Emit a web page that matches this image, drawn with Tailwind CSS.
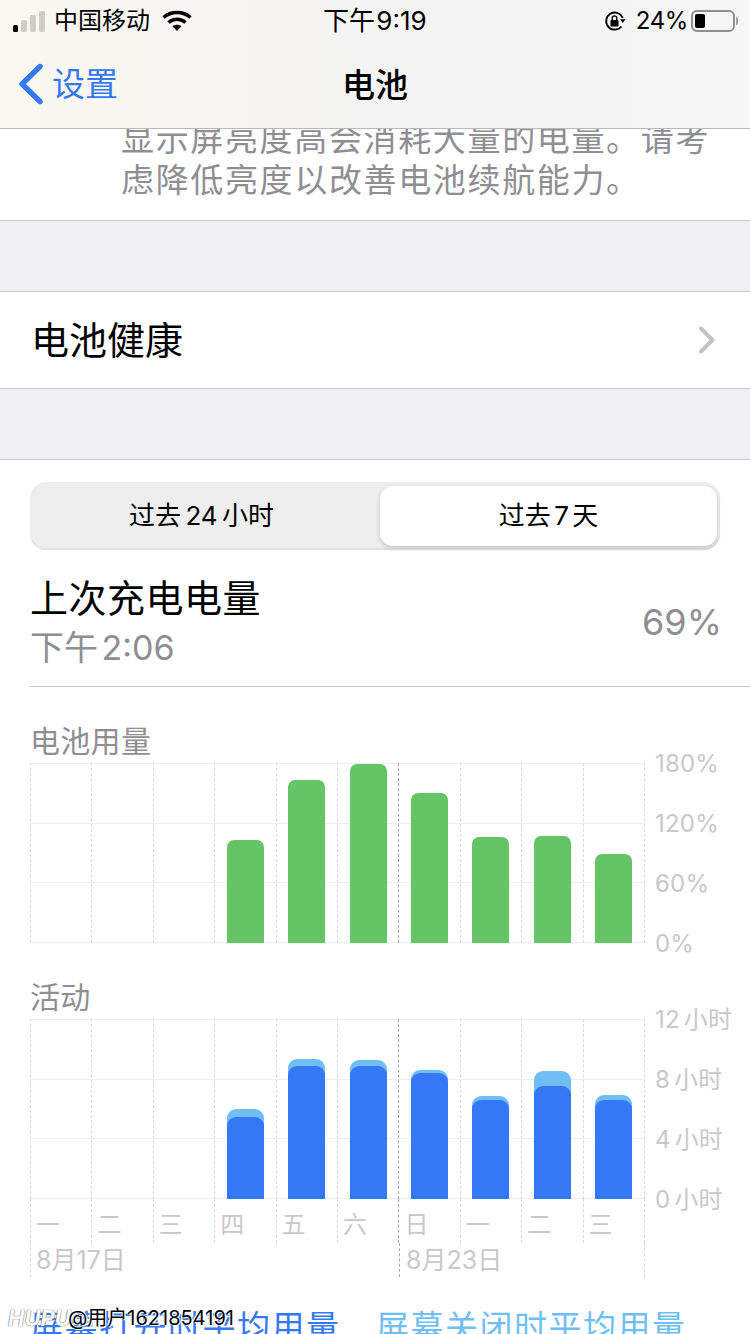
<!DOCTYPE html>
<html lang="zh">
<head>
    <meta charset="UTF-8">
    <meta name="viewport" content="width=device-width, initial-scale=1.0">
    <title>电池</title>
    <script src="https://cdn.jsdelivr.net/npm/@tailwindcss/browser@4"></script>
</head>
<body class="bg-white">
<div class="relative w-[750px] h-[1334px] overflow-hidden bg-white font-['Inter','Noto_Sans_CJK_SC',sans-serif] text-black">

    <!-- Status bar + nav -->
    <header class="h-[129px] border-b border-[#b9b9bc] bg-gradient-to-r from-[#fbf8f1] via-[#f4f4f4] to-[#f6f6f6]">
        <div class="h-[42px] flex items-center justify-between pl-[13px] pr-[12px] relative">
            <div class="flex items-center">
                <div class="flex items-end gap-[3px] h-[22px] mt-[-1px]">
                    <span class="w-[5px] h-[7px] rounded-[1.5px] bg-black"></span>
                    <span class="w-[6px] h-[12px] rounded-[1.5px] bg-[#cfcdc7]"></span>
                    <span class="w-[6px] h-[17px] rounded-[1.5px] bg-[#cfcdc7]"></span>
                    <span class="w-[6px] h-[21px] rounded-[1.5px] bg-[#cfcdc7]"></span>
                </div>
                <span class="ml-[9px] text-[24px] leading-none">中国移动</span>
                <svg class="ml-[12px]" width="30" height="22" viewBox="0 0 30 22">
                    <path d="M1.5 7.5C9 .8 21 .8 28.5 7.5" fill="none" stroke="#000" stroke-width="3.6"/>
                    <path d="M6.5 12.5C11.5 8.2 18.5 8.2 23.5 12.5" fill="none" stroke="#000" stroke-width="3.6"/>
                    <path d="M10.5 16.2C13 14.2 17 14.2 19.5 16.2L15 21Z" fill="#000"/>
                </svg>
            </div>
            <span class="absolute left-[323px] top-[6px] text-[26px] leading-[30px] whitespace-nowrap [word-spacing:-6px]">下午 9:19</span>
            <div class="flex items-center">
                <svg width="22" height="22" viewBox="0 0 22 22">
                    <path d="M17.5 16.5A8.6 8.6 0 1 1 18.8 8" fill="none" stroke="#000" stroke-width="1.8"/>
                    <path d="M16 9.2h5.5L18.8 13Z" fill="#000"/>
                    <rect x="6.5" y="10" width="8" height="6.5" rx="1" fill="#000"/>
                    <path d="M8.2 10V8.2a2.3 2.3 0 0 1 4.6 0V10" fill="none" stroke="#000" stroke-width="1.4"/>
                </svg>
                <span class="ml-[10px] text-[24px] leading-none tracking-[-0.4px]">24%</span>
                <div class="ml-[3px] w-[44px] h-[22px] rounded-[6px] border-2 border-[#8f8f8f] p-[2px]">
                    <div class="w-[10px] h-full rounded-[2px] bg-black"></div>
                </div>
                <span class="ml-[1px] w-[2px] h-[8px] rounded-r bg-[#a0a0a0]"></span>
            </div>
        </div>
        <div class="relative h-[86px] flex items-center justify-center">
            <div class="absolute left-[17px] top-[21px] flex items-center">
                <svg width="27" height="42" viewBox="0 0 27 42">
                    <path d="M23 3.5 5 21l18 17.5" fill="none" stroke="#3478f6" stroke-width="5.4" stroke-linecap="round" stroke-linejoin="round"/>
                </svg>
                <span class="ml-[8px] text-[33px] leading-none text-[#3478f6]">设置</span>
            </div>
            <span class="text-[33px] leading-none font-medium">电池</span>
        </div>
    </header>

    <!-- Brightness tip, scrolled under the nav -->
    <section class="h-[92px] border-b border-[#c8c8cc] bg-white overflow-hidden pl-[121px]">
        <p class="mt-[-10px] text-[33px] leading-[41px] tracking-[1.65px] text-[#8e8e93] whitespace-nowrap">显示屏亮度高会消耗大量的电量。请考<br>虑降低亮度以改善电池续航能力。</p>
    </section>
    <div class="h-[70px] bg-[#efeff4]"></div>

    <!-- Battery health row -->
    <section class="h-[98px] border-y border-[#c8c8cc] flex items-center justify-between pl-[31px] pr-[34px]">
        <span class="text-[38px] leading-none">电池健康</span>
        <svg width="18" height="30" viewBox="0 0 18 30">
            <path d="M3 3.5 14.5 15 3 26.5" fill="none" stroke="#c4c4c7" stroke-width="4" stroke-linecap="round" stroke-linejoin="round"/>
        </svg>
    </section>
    <div class="h-[70px] bg-[#efeff4]"></div>

    <!-- Usage panel -->
    <section class="border-t border-[#c8c8cc] pt-[22px]">
        <div class="mx-[30px] w-[690px] h-[68px] rounded-[16px] bg-[#eeeeef] flex p-[4px] pr-[3px] shadow-[inset_0_-2px_0_#e3e3e5]">
            <div class="w-[346px] pr-[11px] flex items-center justify-center text-[26px] leading-none [word-spacing:-3px]">过去 24 小时</div>
            <div class="flex-1 rounded-[13px] bg-white flex items-center justify-center text-[26px] leading-none [word-spacing:-4px] shadow-[0_2px_5px_rgba(0,0,0,0.18)]">过去 7 天</div>
        </div>

        <div class="ml-[30px] h-[137px] pt-[7px] border-b border-[#c8c8cc] flex items-center justify-between pr-[28px]">
            <div>
                <div class="text-[38px] leading-[46px] tracking-[0.5px]">上次充电电量</div>
                <div class="mt-[6px] text-[34px] leading-[42px] text-[#8e8e93] [word-spacing:-6px]">下午 2:06</div>
            </div>
            <span class="text-[36px] leading-none text-[#8e8e93]">69%</span>
        </div>

        <!-- Battery level chart -->
        <h3 class="ml-[30px] mt-[36px] h-[40px] text-[30px] tracking-[0.3px] leading-[36px] text-[#8e8e93]">电池用量</h3>
        <div class="flex">
            <div class="relative ml-[30px] w-[615px] h-[180px]">
                <div class="absolute inset-0 grid grid-rows-3 border-y border-[#eeeeef]">
                    <div></div>
                    <div class="border-y border-[#eeeeef]"></div>
                    <div></div>
                </div>
                <div class="relative h-full grid grid-cols-10 border-r border-dashed border-[#d9d9db]">
                    <div class="border-l border-dashed border-[#d9d9db]"></div>
                    <div class="border-l border-dashed border-[#d9d9db]"></div>
                    <div class="border-l border-dashed border-[#d9d9db]"></div>
                    <div class="border-l border-dashed border-[#d9d9db] flex items-end justify-center"><div class="w-[37px] h-[103px] rounded-t-[7px] bg-[#65c466]"></div></div>
                    <div class="border-l border-dashed border-[#d9d9db] flex items-end justify-center"><div class="w-[37px] h-[163px] rounded-t-[7px] bg-[#65c466]"></div></div>
                    <div class="border-l border-dashed border-[#d9d9db] flex items-end justify-center"><div class="w-[37px] h-[179px] rounded-t-[7px] bg-[#65c466]"></div></div>
                    <div class="border-l border-dashed border-[#a9a9ac] flex items-end justify-center"><div class="w-[37px] h-[150px] rounded-t-[7px] bg-[#65c466]"></div></div>
                    <div class="border-l border-dashed border-[#d9d9db] flex items-end justify-center"><div class="w-[37px] h-[106px] rounded-t-[7px] bg-[#65c466]"></div></div>
                    <div class="border-l border-dashed border-[#d9d9db] flex items-end justify-center"><div class="w-[37px] h-[107px] rounded-t-[7px] bg-[#65c466]"></div></div>
                    <div class="border-l border-dashed border-[#d9d9db] flex items-end justify-center"><div class="w-[37px] h-[89px] rounded-t-[7px] bg-[#65c466]"></div></div>
                </div>
            </div>
            <div class="ml-[10px] translate-y-[1px] h-[180px] flex flex-col justify-between text-[24px] tracking-[0.2px] text-[#c8c8cc] whitespace-nowrap">
                <span class="h-0 flex items-center">180%</span>
                <span class="h-0 flex items-center">120%</span>
                <span class="h-0 flex items-center">60%</span>
                <span class="h-0 flex items-center">0%</span>
            </div>
        </div>

        <!-- Activity chart -->
        <h3 class="ml-[30px] mt-[36px] h-[40px] text-[30px] tracking-[0.3px] leading-[36px] text-[#8e8e93]">活动</h3>
        <div class="flex">
            <div class="w-[645px]">
                <div class="relative ml-[30px] w-[615px] h-[180px]">
                    <div class="absolute inset-0 grid grid-rows-3 border-y border-[#eeeeef]">
                        <div></div>
                        <div class="border-y border-[#eeeeef]"></div>
                        <div></div>
                    </div>
                    <div class="relative h-full grid grid-cols-10 border-r border-dashed border-[#d9d9db]">
                        <div class="border-l border-dashed border-[#d9d9db]"></div>
                        <div class="border-l border-dashed border-[#d9d9db]"></div>
                        <div class="border-l border-dashed border-[#d9d9db]"></div>
                        <div class="border-l border-dashed border-[#d9d9db] flex items-end justify-center"><div class="w-[37px] h-[90px] pt-[8px] rounded-t-[9px] bg-[#6fbff5]"><div class="h-full rounded-t-[9px] bg-[#3478f6]"></div></div></div>
                        <div class="border-l border-dashed border-[#d9d9db] flex items-end justify-center"><div class="w-[37px] h-[140px] pt-[7px] rounded-t-[9px] bg-[#6fbff5]"><div class="h-full rounded-t-[9px] bg-[#3478f6]"></div></div></div>
                        <div class="border-l border-dashed border-[#d9d9db] flex items-end justify-center"><div class="w-[37px] h-[139px] pt-[6px] rounded-t-[9px] bg-[#6fbff5]"><div class="h-full rounded-t-[9px] bg-[#3478f6]"></div></div></div>
                        <div class="border-l border-dashed border-[#a9a9ac] flex items-end justify-center"><div class="w-[37px] h-[129px] pt-[3px] rounded-t-[9px] bg-[#6fbff5]"><div class="h-full rounded-t-[9px] bg-[#3478f6]"></div></div></div>
                        <div class="border-l border-dashed border-[#d9d9db] flex items-end justify-center"><div class="w-[37px] h-[103px] pt-[4px] rounded-t-[9px] bg-[#6fbff5]"><div class="h-full rounded-t-[9px] bg-[#3478f6]"></div></div></div>
                        <div class="border-l border-dashed border-[#d9d9db] flex items-end justify-center"><div class="w-[37px] h-[128px] pt-[15px] rounded-t-[9px] bg-[#6fbff5]"><div class="h-full rounded-t-[9px] bg-[#3478f6]"></div></div></div>
                        <div class="border-l border-dashed border-[#d9d9db] flex items-end justify-center"><div class="w-[37px] h-[104px] pt-[5px] rounded-t-[9px] bg-[#6fbff5]"><div class="h-full rounded-t-[9px] bg-[#3478f6]"></div></div></div>
                    </div>
                </div>
                <!-- Weekday row -->
                <div class="ml-[30px] w-[615px] h-[44px] grid grid-cols-10 border-r border-dashed border-[#d9d9db] text-[24px] leading-none text-[#c8c8cc]">
                    <div class="border-l border-dashed border-[#d9d9db] pl-[5px] pt-[14px]">一</div>
                    <div class="border-l border-dashed border-[#d9d9db] pl-[5px] pt-[14px]">二</div>
                    <div class="border-l border-dashed border-[#d9d9db] pl-[5px] pt-[14px]">三</div>
                    <div class="border-l border-dashed border-[#d9d9db] pl-[5px] pt-[14px]">四</div>
                    <div class="border-l border-dashed border-[#d9d9db] pl-[5px] pt-[14px]">五</div>
                    <div class="border-l border-dashed border-[#d9d9db] pl-[5px] pt-[14px]">六</div>
                    <div class="border-l border-dashed border-[#a9a9ac] pl-[5px] pt-[14px]">日</div>
                    <div class="border-l border-dashed border-[#d9d9db] pl-[5px] pt-[14px]">一</div>
                    <div class="border-l border-dashed border-[#d9d9db] pl-[5px] pt-[14px]">二</div>
                    <div class="border-l border-dashed border-[#d9d9db] pl-[5px] pt-[14px]">三</div>
                </div>
                <!-- Date row -->
                <div class="ml-[30px] w-[615px] h-[34px] grid grid-cols-[369px_1fr] border-r border-dashed border-[#d9d9db] text-[25px] leading-[34px] text-[#c8c8cc]">
                    <div class="border-l border-dashed border-[#d9d9db] pl-[5px]">8月17日</div>
                    <div class="border-l border-dashed border-[#a9a9ac] pl-[6px]">8月23日</div>
                </div>
            </div>
            <div class="ml-[10px] translate-y-[1px] h-[180px] flex flex-col justify-between text-[24px] tracking-[0.2px] text-[#c8c8cc] whitespace-nowrap [word-spacing:-3px]">
                <span class="h-0 flex items-center">12 小时</span>
                <span class="h-0 flex items-center">8 小时</span>
                <span class="h-0 flex items-center">4 小时</span>
                <span class="h-0 flex items-center">0 小时</span>
            </div>
        </div>

        <!-- Legend, cut off by the screen edge -->
        <div class="mt-[31px] flex pl-[30px] text-[33px] leading-[38px] whitespace-nowrap">
            <span class="w-[346px] tracking-[1.5px] text-[#3478f6]">屏幕打开时平均用量</span>
            <span class="tracking-[1.5px] text-[#6fbff5]">屏幕关闭时平均用量</span>
        </div>
    </section>

    <!-- Image host watermark -->
    <div class="absolute left-[8px] top-[1305px] flex items-center whitespace-nowrap">
        <span class="w-[60px] text-[22px] leading-[26px] italic font-bold text-white [text-shadow:0_0_1px_#555,0_0_1px_#555]">HUPU</span>
        <span class="text-[20px] leading-[26px] text-black [text-shadow:1px_0_0_#fff,-1px_-1px_0_#fff,1px_1px_0_#fff]">@用户1621854191</span>
    </div>
</div>
</body>
</html>
